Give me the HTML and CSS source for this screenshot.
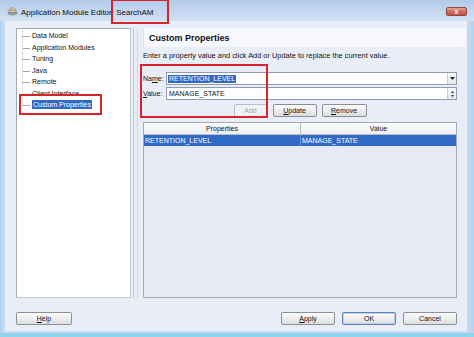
FILE: index.html
```html
<!DOCTYPE html>
<html>
<head>
<meta charset="utf-8">
<link rel="stylesheet" href="styles.css">
</head>
<body>
<div class="window">
  <div class="titlebar">
    <svg class="app-icon" width="11" height="10" viewBox="0 0 11 10">
      <ellipse cx="5.5" cy="7" rx="5" ry="2.4" fill="#9a9a9a"/>
      <path d="M2 6.5 C2 3 3.5 1.5 5.5 1.5 C7.5 1.5 9 3 9 6.5 Z" fill="#c8c8c8" stroke="#7a7a7a" stroke-width="0.6"/>
      <path d="M3.2 4 L7.8 4" stroke="#c99a4a" stroke-width="1.2"/>
    </svg>
    <span class="title">Application Module Editor: SearchAM</span>
    <div class="close"><span>x</span></div>
  </div>
  <div class="client">
    <div class="main">
      <div class="nav">
        <ul class="tree">
          <li>Data Model</li>
          <li>Application Modules</li>
          <li>Tuning</li>
          <li>Java</li>
          <li>Remote</li>
          <li>Client Interface</li>
          <li class="last"><span class="selected">Custom Properties</span></li>
        </ul>
      </div>
      <div class="splitter"></div>
      <div class="content">
        <div class="header">Custom Properties</div>
        <p class="hint">Enter a property value and click Add or Update to replace the current value.</p>
        <div class="form">
          <div class="row">
            <span class="label">Na<u>m</u>e:</span>
            <div class="field combo"><span class="sel-text">RETENTION_LEVEL</span><span class="drop"><svg width="5" height="3" viewBox="0 0 5 3"><path d="M0 0 H5 L2.5 3 Z" fill="#222"/></svg></span></div>
          </div>
          <div class="row">
            <span class="label"><u>V</u>alue:</span>
            <div class="field"><span class="val-text">MANAGE_STATE</span><span class="spin"><svg width="3" height="2" viewBox="0 0 3 2"><path d="M0 2 H3 L1.5 0 Z" fill="#333"/></svg><svg width="3" height="2" viewBox="0 0 3 2"><path d="M0 0 H3 L1.5 2 Z" fill="#333"/></svg></span></div>
          </div>
        </div>
        <div class="actions">
          <button class="btn add" disabled>Add</button>
          <button class="btn update"><u>U</u>pdate</button>
          <button class="btn remove"><u>R</u>emove</button>
        </div>
        <div class="table">
          <div class="thead">
            <div class="th col1">Properties</div>
            <div class="th col2">Value</div>
          </div>
          <div class="tr selected-row">
            <div class="td col1">RETENTION_LEVEL</div>
            <div class="td col2">MANAGE_STATE</div>
          </div>
        </div>
      </div>
    </div>
    <div class="footer">
      <button class="btn fbtn"><u>H</u>elp</button>
      <div class="spacer"></div>
      <button class="btn fbtn"><u>A</u>pply</button>
      <button class="btn fbtn ok">OK</button>
      <button class="btn fbtn">Cancel</button>
    </div>
  </div>
  <div class="annot annot-title"></div>
  <div class="annot annot-tree"></div>
  <div class="annot annot-form"></div>
</div>
</body>
</html>
```

FILE: styles.css
```css
* { box-sizing: border-box; }
html, body {
  margin: 0;
  padding: 0;
}
body {
  width: 474px;
  height: 337px;
  overflow: hidden;
  background: #8fd3ec;
  font-family: "Liberation Sans", Arial, sans-serif;
  font-size: 7px;
  color: #111;
}
.window {
  position: relative;
  width: 474px;
  height: 333px;
  background: linear-gradient(to right, #b4cfec 0px, #c9dcf1 4px, #c9dcf1 466px, #b6d2ee 474px);
  display: flex;
  flex-direction: column;
}
.titlebar {
  height: 21px;
  flex: none;
  display: flex;
  align-items: center;
  padding-left: 7px;
  background: linear-gradient(to bottom, #b1cae8 0%, #c4d7ee 55%, #d3e2f3 100%);
}
.app-icon { flex: none; margin-top: 1px; }
.title {
  margin-left: 3px;
  font-size: 8px;
  color: #111;
  margin-top: 3px;
  flex: 1;
}
.close {
  width: 21px;
  height: 9px;
  margin-right: 7px;
  margin-top: 2px;
  border: 1px solid #8d4a44;
  border-radius: 2px;
  background: linear-gradient(to bottom, #e9a39a 0%, #d26a5c 50%, #c44f40 100%);
  display: flex;
  align-items: center;
  justify-content: center;
}
.close span {
  color: #fff;
  font-size: 7px;
  font-weight: bold;
  line-height: 7px;
}
.client {
  flex: 1;
  margin: 0 7px 2px 5px;
  background: #e9edf7;
  padding: 7px 10px 0 11px;
  display: flex;
  flex-direction: column;
}
.main {
  height: 270px;
  display: flex;
}
.nav {
  width: 115px;
  background: #fff;
  border: 1px solid #a5a9b2;
  border-right-color: #c5c8ce;
  border-bottom-color: #c5c8ce;
}
.tree {
  list-style: none;
  margin: 0;
  padding: 1px 0 0 0;
}
.tree li {
  position: relative;
  height: 11.5px;
  line-height: 11.5px;
  padding-left: 15px;
  white-space: nowrap;
}
.tree li::before {
  content: "";
  position: absolute;
  left: 5px;
  top: 6px;
  width: 8px;
  border-top: 1px solid #a8a8a8;
}
.tree li::after {
  content: "";
  position: absolute;
  left: 5px;
  top: 0;
  height: 100%;
  border-left: 1px dotted #d0d0d0;
}
.tree li.last::after { height: 6px; }
.tree .selected {
  background: #3169c6;
  color: #fff;
  padding: 1px 1px 1px 1px;
}
.splitter {
  width: 12px;
  flex: none;
  display: flex;
  justify-content: flex-start;
  padding-left: 2px;
}
.splitter::before {
  content: "";
  width: 3px;
  border-left: 1px solid #c3c6cd;
  border-right: 1px solid #d4d7de;
}
.content {
  flex: 1;
  display: flex;
  flex-direction: column;
  min-width: 0;
}
.header {
  height: 19px;
  line-height: 20px;
  margin-right: -9px;
  padding-left: 5px;
  font-size: 9px;
  font-weight: bold;
  color: #111;
  background: #f6f8fc;
  border-left: 1px solid #dfe3ec;
}
.hint {
  margin: 3px 0 0 0;
  height: 11px;
  line-height: 11px;
  font-size: 7.4px;
  white-space: nowrap;
}
.form {
  margin-top: 11px;
  display: flex;
  flex-direction: column;
  gap: 2px;
}
.row {
  display: flex;
  align-items: center;
  height: 13px;
}
.label {
  width: 23px;
  flex: none;
}
.field {
  flex: 1;
  height: 13px;
  background: #fff;
  border: 1px solid #8e9bb0;
  display: flex;
  align-items: center;
  padding-left: 1px;
}
.sel-text {
  background: #3169c6;
  color: #fff;
  padding: 0 1px;
  line-height: 8px;
}
.val-text { padding-left: 1px; }
.drop, .spin {
  margin-left: auto;
  width: 9px;
  height: 11px;
  border-left: 1px solid #c9ced8;
  background: linear-gradient(to bottom, #fafafa, #e4e6ea);
  display: flex;
  align-items: center;
  justify-content: center;
}
.spin {
  flex-direction: column;
  gap: 2px;
}
.actions {
  margin-top: 4px;
  display: flex;
  justify-content: center;
  gap: 5px;
  height: 13px;
}
.btn {
  font-family: "Liberation Sans", Arial, sans-serif;
  font-size: 7px;
  color: #111;
  height: 13px;
  padding: 0;
  border: 1px solid #8b8e94;
  border-radius: 2px;
  background: linear-gradient(to bottom, #fbfbfb 0%, #eeeeee 50%, #dcdcdc 100%);
  line-height: 11px;
}
.add { width: 34px; color: #a3a3a3; border-color: #b8bcc4; background: #f1f2f5; }
.update { width: 44px; }
.remove { width: 45px; }
.table {
  margin-top: 5px;
  flex: 1;
  border: 1px solid #a5a9b2;
  background: #e6eaf5;
  display: flex;
  flex-direction: column;
}
.thead, .tr {
  display: flex;
  height: 11px;
  line-height: 11px;
}
.thead {
  background: linear-gradient(to bottom, #fafbfc, #eceef2);
  border-bottom: 1px solid #b8bcc4;
  height: 12px;
}
.th { text-align: center; }
.thead .col1 { border-right: 1px solid #b8bcc4; }
.col1 { width: 157px; flex: none; }
.col2 { flex: 1; }
.td { padding-left: 1px; }
.selected-row {
  background: #3169c6;
  color: #fff;
}
.selected-row .col1 { border-right: 1px solid #6d93d6; }
.footer {
  flex: 1;
  display: flex;
  align-items: flex-start;
  padding-top: 14px;
  gap: 7px;
}
.spacer { flex: 1; }
.fbtn { width: 54px; }
.footer .fbtn:first-child { width: 56px; }
.ok { border-color: #5f7fb0; box-shadow: inset 0 0 0 1px #b9d2f0; }
.annot {
  position: absolute;
  border: 2px solid #d8232b;
  pointer-events: none;
}
.annot-title { left: 111px; top: -1px; width: 58px; height: 25px; }
.annot-tree { left: 19px; top: 94px; width: 83px; height: 21px; }
.annot-form { left: 140px; top: 64px; width: 128px; height: 54px; }
```
